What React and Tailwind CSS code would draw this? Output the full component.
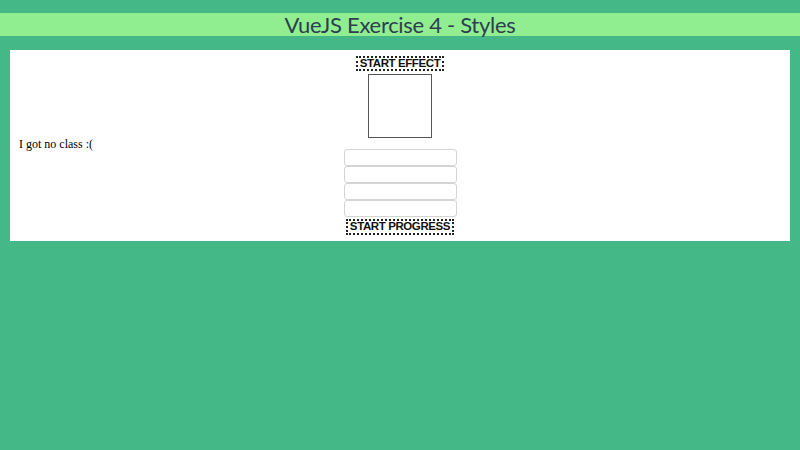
export default function App() {
  return (
    <div className="min-h-[450px] w-[800px] bg-[#44b886] pt-[13px]">
      <div className="flex h-[23px] items-center justify-center bg-[#90ee90]">
        <h1 className="text-[22px] leading-none text-[#2c3e50] [font-family:Lato,'Open_Sans',sans-serif] tracking-[-0.3px]">
          VueJS Exercise 4 - Styles
        </h1>
      </div>
      <div className="mx-[10px] mt-[14px] flex h-[191px] flex-col bg-white px-[9px] pt-[6px]">
        <div className="flex justify-center">
          <button className="h-[15px] border-2 border-dotted border-[#222] px-[2px] text-[11.5px] font-bold leading-none tracking-[-0.4px] text-[#111] [font-family:'Liberation_Sans',Arial,sans-serif]">
            START EFFECT
          </button>
        </div>
        <div className="mt-[3px] flex justify-center">
          <div className="h-[64px] w-[64px] border border-[#555]" />
        </div>
        <p className="mt-[1px] h-[11px] text-[12px] leading-[11px] text-black [font-family:'Liberation_Serif','Times_New_Roman',serif]">
          I got no class :(
        </p>
        <div className="mt-[-1px] flex flex-col items-center">
          <input className="h-[17px] w-[113px] rounded-[3px] border border-[#d4d4d4]" />
          <input className="h-[17px] w-[113px] rounded-[3px] border border-[#d4d4d4]" />
          <input className="h-[17px] w-[113px] rounded-[3px] border border-[#d4d4d4]" />
          <input className="h-[17px] w-[113px] rounded-[3px] border border-[#d4d4d4]" />
        </div>
        <div className="mt-[2px] flex justify-center">
          <button className="h-[16px] border-2 border-dotted border-[#222] px-[2px] text-[11.5px] font-bold leading-none tracking-[-0.4px] text-[#111] [font-family:'Liberation_Sans',Arial,sans-serif]">
            START PROGRESS
          </button>
        </div>
      </div>
    </div>
  );
}
